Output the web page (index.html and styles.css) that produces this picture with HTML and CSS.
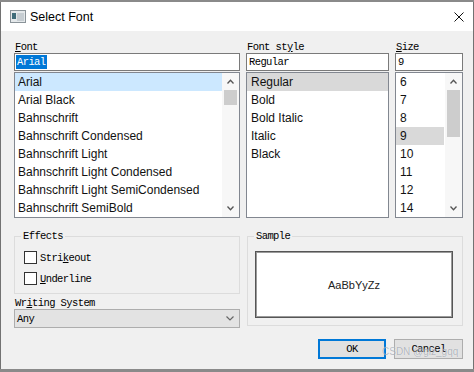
FILE: index.html
```html
<!DOCTYPE html>
<html>
<head>
<meta charset="utf-8">
<title>Select Font</title>
<link rel="stylesheet" href="styles.css">
</head>
<body>
<div class="window">
  <div class="titlebar">
    <svg class="app-icon" width="16" height="13" viewBox="0 0 16 13"><rect x="0.5" y="0.5" width="15" height="12" fill="#e4e8ea" stroke="#8a9399"/><rect x="2" y="3" width="4" height="6" fill="#3f6c7a"/><rect x="7" y="3" width="7" height="8" fill="#c6cdd2"/></svg>
    <span class="title">Select Font</span>
    <svg class="close" width="10" height="10" viewBox="0 0 10 10"><path d="M0.5 0.5L9.5 9.5M9.5 0.5L0.5 9.5" stroke="#111" stroke-width="1"/></svg>
  </div>
  <div class="content">
    <div class="pickers">
      <div class="col">
        <div class="lbl"><u>F</u>ont</div>
        <div class="input"><span class="sel-text">Arial</span></div>
        <div class="list">
          <ul class="items">
            <li class="focus-sel">Arial</li>
            <li>Arial Black</li>
            <li>Bahnschrift</li>
            <li>Bahnschrift Condensed</li>
            <li>Bahnschrift Light</li>
            <li>Bahnschrift Light Condensed</li>
            <li>Bahnschrift Light SemiCondensed</li>
            <li>Bahnschrift SemiBold</li>
          </ul>
          <div class="scrollbar">
            <div class="sb-btn"><svg width="7" height="5" viewBox="0 0 7 5"><path d="M0.5 4.5L3.5 1.2L6.5 4.5" fill="none" stroke="#555" stroke-width="1.3"/></svg></div>
            <div class="track"><div class="thumb thumb-font"></div></div>
            <div class="sb-btn"><svg width="7" height="5" viewBox="0 0 7 5"><path d="M0.5 0.5L3.5 3.8L6.5 0.5" fill="none" stroke="#555" stroke-width="1.3"/></svg></div>
          </div>
        </div>
      </div>
      <div class="col">
        <div class="lbl">Font st<u>y</u>le</div>
        <div class="input"><span class="plain-text">Regular</span></div>
        <div class="list">
          <ul class="items items-style">
            <li class="sel">Regular</li>
            <li>Bold</li>
            <li>Bold Italic</li>
            <li>Italic</li>
            <li>Black</li>
          </ul>
        </div>
      </div>
      <div class="col">
        <div class="lbl"><u>S</u>ize</div>
        <div class="input"><span class="plain-text">9</span></div>
        <div class="list">
          <ul class="items items-size">
            <li>6</li>
            <li>7</li>
            <li>8</li>
            <li class="sel">9</li>
            <li>10</li>
            <li>11</li>
            <li>12</li>
            <li>14</li>
          </ul>
          <div class="scrollbar">
            <div class="sb-btn"><svg width="7" height="5" viewBox="0 0 7 5"><path d="M0.5 4.5L3.5 1.2L6.5 4.5" fill="none" stroke="#555" stroke-width="1.3"/></svg></div>
            <div class="track"><div class="thumb thumb-size"></div></div>
            <div class="sb-btn"><svg width="7" height="5" viewBox="0 0 7 5"><path d="M0.5 0.5L3.5 3.8L6.5 0.5" fill="none" stroke="#555" stroke-width="1.3"/></svg></div>
          </div>
        </div>
      </div>
    </div>

    <div class="lower">
      <div class="left">
        <fieldset class="group effects">
          <legend>Effects</legend>
          <div class="check"><span class="box"></span><span>Stri<u>k</u>eout</span></div>
          <div class="check"><span class="box"></span><span><u>U</u>nderline</span></div>
        </fieldset>
        <div class="lbl ws-lbl">Wr<u>i</u>ting System</div>
        <div class="combo">
          <span>Any</span>
          <svg width="8" height="5" viewBox="0 0 8 5"><path d="M0.5 0.5L4 4L7.5 0.5" fill="none" stroke="#666" stroke-width="1.2"/></svg>
        </div>
      </div>
      <fieldset class="group sample">
        <legend>Sample</legend>
        <div class="sample-box">AaBbYyZz</div>
      </fieldset>
    </div>

    <div class="buttons">
      <button class="btn btn-default">OK</button>
      <button class="btn">Cancel</button>
    </div>
  </div>
  <div class="watermark">CSDN @glz_gqq</div>
</div>
</body>
</html>
```
FILE: styles.css
```css
* { box-sizing: border-box; }
html, body { margin: 0; padding: 0; }
body {
  background: #8a8a8a;
  width: 474px;
  height: 372px;
  overflow: hidden;
  font-family: "Liberation Sans", Arial, sans-serif;
  color: #000;
}
.window {
  position: relative;
  margin-top: 2px;
  width: 474px;
  height: 367px;
  background: #f0f0f0;
  border-left: 1px solid #727272;
  border-right: 1px solid #727272;
  display: flex;
  flex-direction: column;
}
.titlebar {
  height: 29px;
  flex: none;
  background: #fff;
  display: flex;
  align-items: center;
  padding: 0 9px 0 9px;
}
.app-icon { margin-right: 4px; }
.title { font-size: 12.5px; flex: 1; padding-top: 1px; }
.close { margin-top: 1px; }

.content { flex: 1; padding: 11px 10px 0 13px; }

.lbl, .input, legend, .check, .combo, .btn {
  font-family: "Liberation Mono", "Courier New", monospace;
  font-size: 10.5px;
  letter-spacing: -0.6px;
  color: #000;
}
.lbl { height: 11px; line-height: 11px; padding-left: 1px; }

.pickers {
  display: grid;
  grid-template-columns: 226px 143px 68px;
  column-gap: 6px;
}
.col { display: flex; flex-direction: column; }
.input {
  height: 18px;
  border: 1px solid #7a7a7a;
  background: #fff;
  display: flex;
  align-items: center;
  padding-left: 1px;
}
.sel-text { background: #0078d7; color: #fff; line-height: 14px; padding: 0 1px; }
.plain-text { padding-left: 1px; }

.list {
  margin-top: 1px;
  height: 146px;
  border: 1px solid #828790;
  background: #fff;
  display: flex;
  overflow: hidden;
}
.items { flex: 1; list-style: none; margin: 0; padding: 0; min-width: 0; }
.items li {
  height: 18px;
  line-height: 18px;
  font-size: 12px;
  padding-left: 3px;
  white-space: nowrap;
  color: #111;
}
.items-style li { padding-left: 4px; }
.items-size li { padding-left: 4px; }
.items li.focus-sel { background: #cce8ff; }
.items li.sel { background: #d9d9d9; }
.items-size li.sel { margin-right: 1px; }

.scrollbar {
  width: 17px;
  flex: none;
  display: flex;
  flex-direction: column;
  background: #f7f7f7;
}
.sb-btn { height: 17px; display: flex; align-items: center; justify-content: center; }
.track { flex: 1; padding: 0 2px 0 2px; }
.thumb { background: #cdcdcd; }
.thumb-font { height: 15px; }
.thumb-size { height: 47px; }

.lower {
  margin-top: 12px;
  display: grid;
  grid-template-columns: 226px 216px;
  column-gap: 7px;
  align-items: start;
}
.group {
  margin: 0;
  min-width: 0;
  border: 1px solid #dcdcdc;
}
legend { padding: 0 2px; line-height: 12px; height: 12px; }
.effects { padding: 5px 9px 4px 9px; }
.effects legend { margin-left: -3px; }
.check { height: 21px; display: flex; align-items: center; gap: 3px; }
.box { width: 13px; height: 13px; border: 1px solid #333; background: #fff; }
.ws-lbl { margin-top: 3px; height: 12px; line-height: 12px; }
.combo {
  margin-top: 0;
  height: 19px;
  border: 1px solid #adadad;
  background: #e3e3e3;
  display: flex;
  align-items: center;
  justify-content: space-between;
  padding: 0 5px 0 2px;
}
.sample { padding: 9px 9px 7px 7px; }
.sample legend { margin-left: -1px; }
.sample-box {
  height: 67px;
  background: #fff;
  border: 1px solid #555;
  box-shadow: inset 0 0 0 1px #9a9a9a;
  display: flex;
  align-items: center;
  justify-content: center;
  font-family: "Liberation Sans", Arial, sans-serif;
  font-size: 11px;
  color: #222;
}

.buttons {
  margin-top: 11px;
  display: flex;
  justify-content: flex-end;
  gap: 8px;
}
.btn {
  width: 68px;
  height: 20px;
  padding: 0;
  border: 1px solid #adadad;
  background: #e1e1e1;
}
.btn + .btn { width: 69px; }
.btn-default { border-color: #0078d7; box-shadow: inset 0 0 0 1px #0078d7; }

.watermark {
  position: absolute;
  left: 381px;
  top: 344px;
  font-family: "Liberation Sans", Arial, sans-serif;
  font-size: 10px;
  color: rgba(80, 90, 110, 0.4);
  text-shadow: 0 0 1px rgba(255,255,255,0.8);
  pointer-events: none;
}
```
